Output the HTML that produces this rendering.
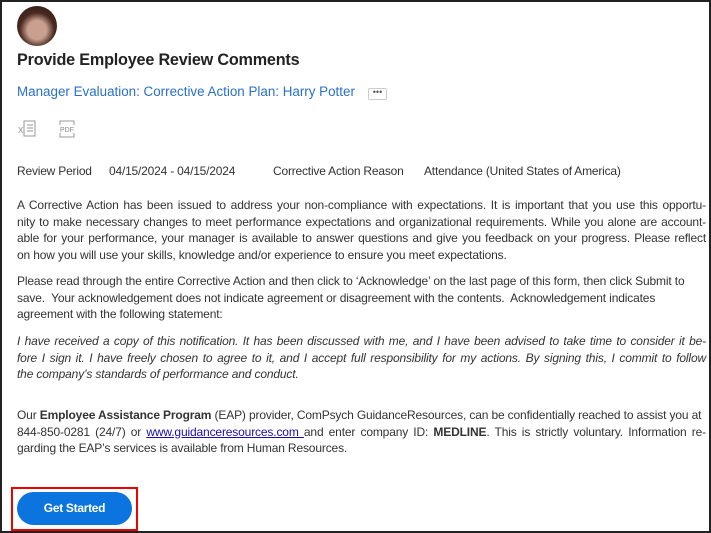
<!DOCTYPE html>
<html><head><style>
body{margin:0;width:711px;height:533px;overflow:hidden;background:#fff;font-family:"Liberation Sans",Arial,sans-serif;color:#333;}
.frame{position:absolute;left:0;top:0;width:707px;height:529px;border:2px solid #222;}
.av{position:absolute;left:17px;top:6px;width:40px;height:40px;border-radius:50%;background:radial-gradient(circle at 50% 60%,#c9a090 0 30%,#4a2a20 55%,#2a1510 100%);}
h1{position:absolute;left:17px;top:51px;margin:0;font-size:16.2px;font-weight:bold;color:#222;letter-spacing:-0.2px;}
.link{position:absolute;left:17px;top:84px;font-size:13.4px;color:#2a6fc9;letter-spacing:0px;}
.dots{position:absolute;left:368px;top:88px;width:17px;height:10px;border:1px solid #ccc;border-radius:2px;font-size:9px;line-height:7px;text-align:center;color:#555;}
.ic{position:absolute;top:120px;font-size:8px;color:#888;}
.row{position:absolute;top:164px;font-size:12px;letter-spacing:-0.2px;}
.p{position:absolute;left:17px;width:689px;font-size:12px;line-height:16.5px;letter-spacing:-0.15px;}
.p div{text-align:justify;text-align-last:justify;}
.p div.l{text-align-last:left;}
i{font-style:italic}
.btn{position:absolute;left:17px;top:492px;width:115px;height:33px;border-radius:17px;background:#0b74de;color:#fff;font-size:12px;font-weight:bold;text-align:center;line-height:33px;letter-spacing:-0.3px;}
.red{position:absolute;left:11px;top:487px;width:123px;height:40px;border:2px solid #e00;}
a{color:#1a0dab;text-decoration:underline;}
</style></head><body>
<div class="frame"></div>
<div class="av"></div>
<h1>Provide Employee Review Comments</h1>
<div class="link">Manager Evaluation: Corrective Action Plan: Harry Potter</div>
<div class="dots">•••</div>
<svg class="ic" style="left:18px" width="20" height="18" viewBox="0 0 20 18"><text x="0" y="13" font-size="8" fill="#888" font-family="Liberation Sans">X</text><rect x="6" y="1" width="11" height="15" fill="none" stroke="#999"/><path d="M9 5h6M9 8h6M9 11h6" stroke="#999"/></svg>
<svg class="ic" style="left:58px" width="20" height="18" viewBox="0 0 20 18"><path d="M2 5V1h14v4M2 13v4h14v-4" fill="none" stroke="#999"/><text x="2" y="12" font-size="7" fill="#888" font-family="Liberation Sans">PDF</text></svg>
<div class="row" style="left:17px">Review Period</div>
<div class="row" style="left:109px">04/15/2024 - 04/15/2024</div>
<div class="row" style="left:273px">Corrective Action Reason</div>
<div class="row" style="left:424px">Attendance (United States of America)</div>
<div class="p" style="top:197px">
<div>A Corrective Action has been issued to address your non-compliance with expectations. It is important that you use this opportu-</div>
<div>nity to make necessary changes to meet performance expectations and organizational requirements. While you alone are account-</div>
<div>able for your performance, your manager is available to answer questions and give you feedback on your progress. Please reflect</div>
<div class="l">on how you will use your skills, knowledge and/or experience to ensure you meet expectations.</div>
</div>
<div class="p" style="top:273px">
<div class="l">Please read through the entire Corrective Action and then click to ‘Acknowledge’ on the last page of this form, then click Submit to</div>
<div class="l">save.&nbsp; Your acknowledgement does not indicate agreement or disagreement with the contents.&nbsp; Acknowledgement indicates</div>
<div class="l">agreement with the following statement:</div>
</div>
<div class="p" style="top:333px"><i>
<div>I have received a copy of this notification. It has been discussed with me, and I have been advised to take time to consider it be-</div>
<div>fore I sign it. I have freely chosen to agree to it, and I accept full responsibility for my actions. By signing this, I commit to follow</div>
<div class="l">the company’s standards of performance and conduct.</div></i>
</div>
<div class="p" style="top:407px">
<div class="l">Our <b>Employee Assistance Program</b> (EAP) provider, ComPsych GuidanceResources, can be confidentially reached to assist you at</div>
<div>844-850-0281 (24/7) or <a>www.guidanceresources.com </a>and enter company ID: <b>MEDLINE</b>. This is strictly voluntary. Information re-</div>
<div class="l">garding the EAP’s services is available from Human Resources.</div>
</div>
<div class="btn">Get Started</div>
<div class="red"></div>
</body></html>
